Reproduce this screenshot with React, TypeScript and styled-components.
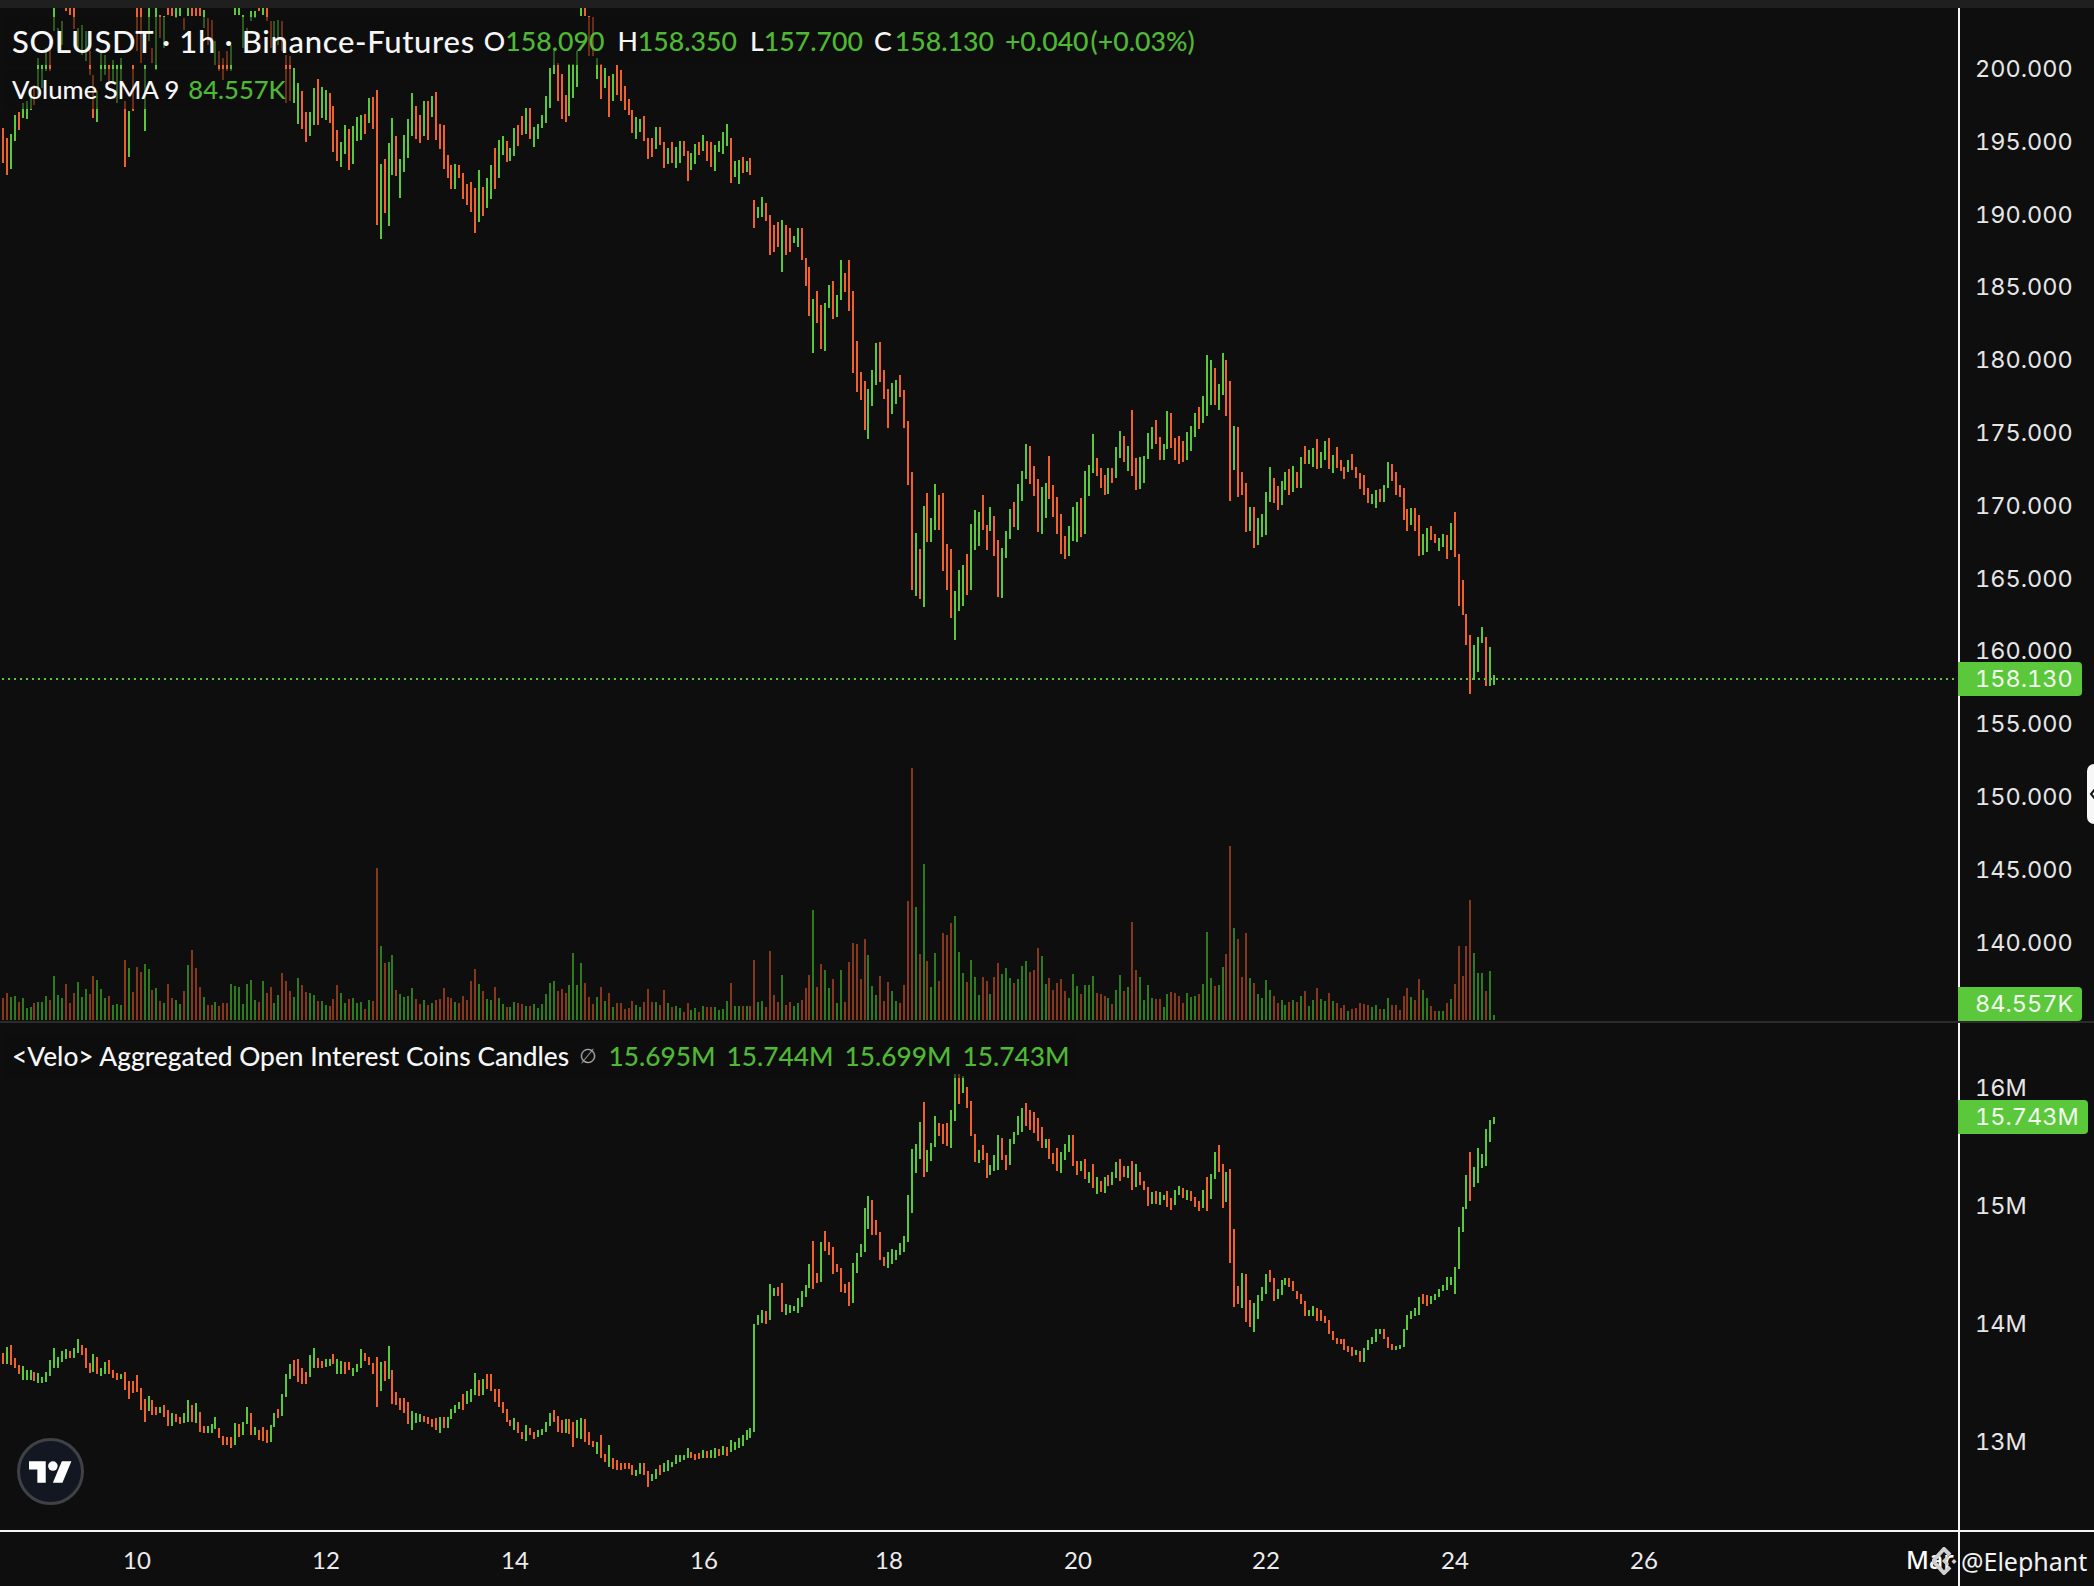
import React from "react"
import styled, { createGlobalStyle } from "styled-components"

const GREEN = "#5ac83a"
const ORANGE = "#f0622a"
const BAR_STEP = 3.934

interface Bar {
	up: boolean
	top: number
	bottom: number
}

// traced bars, "<o|g><top>,<bottom>" with y taken from zoomed crops
const parseBars = (src: string, originY: number, scaleY: number): Bar[] =>
	src
		.trim()
		.split(/\s+/)
		.map((tok) => {
			const [a, b] = tok.slice(1).split(",").map(Number)
			return { up: tok[0] === "g", top: originY + a / scaleY, bottom: originY + b / scaleY }
		})

const PRICE_LEFT = `o360,465 o390,500 g378,483 g320,398 o312,366 g285,330 g280,332 g245,305 o230,290 g150,260 g170,240 g120,190 o100,190
g0,70 g60,130 g40,110 o0,10 o0,22 o0,62 g60,130 g50,140 g70,160 o130,200 o200,330 g250,342 g130,220 g140,200 o170,230 g155,225 g170,285 g150,245
o280,476 g310,446 o170,310 o0,130 o0,165 g170,368 g0,100 o120,165 g0,185 o20,90 g25,120 o0,20 o0,25 g0,30 g0,25 o30,65 g0,25 o0,25 o0,25 o0,25
g5,60 o30,110 o35,100 g100,170 o130,190 o150,215 o130,190 g110,190 g0,20 g0,20 g20,120 g60,130 g10,40 g10,30 o0,8 g0,20 o0,40 o40,120 g38,100
g35,110 o40,130 o140,285 o145,280 g180,285 g225,348 o250,362 o312,402 g312,384 g240,350 o213,352 g236,330 g245,335 o255,345 o293,432 o365,460
g402,476 g350,438 o362,486 g355,468 g328,398 g320,396 o318,378 g270,345 o266,362 o246,650 g468,692 o453,615 g405,654 g330,500 o385,503 g453,570
g380,492 g333,450 g255,385 o293,392 o322,405 g280,385 o280,395 g265,328 o252,395 o347,423 o350,482 o440,510 o470,542 g467,543 o470,510 o495,572
o528,590 o522,613 o540,675 g487,642 o537,623 g510,600 g470,572 o420,543 g396,510 g385,440 o400,462 g420,458 g360,445 o350,415 o325,380 g300,378
o300,393 g358,417 g348,392 g320,360 g265,345 g180,300 g130,198 o165,280 o197,332 o260,342 g168,325 g168,270 g130,237 g0,25 o0,25 o25,145 o28,145
g150,212 o168,272 g180,240 o205,327 g197,278 o172,260 o186,280 o234,305 o272,322 o305,375 g328,392 g333,372 o325,398 o390,452 o390,447 g357,422
o357,412 o402,480 g420,467 o403,465 g417,480 g400,465 o400,445 o428,518 g435,487 g408,468 o403,442 g380,430 o400,460 o403,476 g410,488 g400,433
g373,438 g349,413 o390,525 g458,508 g456,527 o447,495 g460,492 o450,500 o576,660 g598,630 g567,627 o585,640`

const PRICE_RIGHT = `o-75,45 o-45,36 o-54,20 g-60,95 o-45,45 o-36,35 g-12,8 g-36,20 o-36,60 o55,138 o82,228 g178,338 o153,248 o195,326 g190,332 g135,203
o124,236 g165,230 g60,180 o99,155 o60,212 o153,398 o303,456 o396,480 o423,570 g447,597 g390,498 g309,435 o306,426 o390,477 o447,564 g430,522 g420,492
o405,471 o450,564 o543,735 o696,1050 g879,1068 o927,1077 g798,1101 o759,906 g834,906 g732,870 o765,870 o759,993 o912,1050 o927,1134 g1053,1200
g990,1113 g975,1098 o942,1065 g852,1050 g810,930 g816,918 o765,870 o855,930 g801,873 o828,948 o900,1071 g924,1074 g873,954 g807,897 o786,861 g732,870
g693,783 g612,717 o618,732 o678,768 o717,876 g741,882 g729,834 o648,777 o735,831 o771,882 o822,942 o888,957 g858,948 g801,903 g786,906 o774,891
g693,882 g675,768 g582,699 o654,708 o684,744 o705,765 g684,762 o684,729 g621,714 g573,654 o588,666 g618,693 o510,708 o654,750 g651,747 g648,729
g579,657 g561,627 o540,612 o591,660 g612,660 g513,627 o519,624 o594,660 o588,672 o603,666 g576,660 g558,633 g519,591 o501,567 g468,549 g345,528
g360,495 o384,495 g432,510 g339,465 o360,528 o423,783 g558,690 o561,771 o696,765 o729,876 g801,873 o801,924 g834,915 g822,891 g756,885 g681,786
o714,789 o738,810 g723,795 g696,750 o687,765 g678,756 o696,744 g651,744 o618,672 g630,672 g624,681 o597,687 g636,684 g603,660 o594,687 g645,699
o621,684 o660,693 o681,717 g660,696 o642,690 o681,714 o699,747 o705,765 o744,789 g762,792 g750,804 o747,786 g735,786 g666,744 o672,723 o696,765
o735,771 o744,840 o807,873 g804,855 o804,873 o825,948 g882,945 g864,936 o858,900 o882,909 g894,933 g882,921 o885,957 g849,930 o816,951 o942,1098
o1020,1125 o1122,1215 o1185,1362 g1215,1320 g1191,1296 g1161,1209 o1191,1338 g1221,1338 g1305,1335`

const VOLUME_TOPS = [
	714, 699, 711, 708, 726, 714, 744, 741, 729, 726, 726, 708, 720, 648, 705, 714, 672, 729, 699, 666, 711, 687, 702, 648, 660, 687, 714, 708, 735, 732,
	735, 600, 624, 696, 621, 636, 612, 627, 690, 684, 723, 729, 672, 714, 720, 732, 693, 615, 570, 624, 681, 711, 735, 735, 726, 738, 729, 729, 672, 678,
	681, 732, 672, 660, 720, 726, 663, 699, 681, 729, 705, 639, 663, 693, 711, 654, 675, 696, 699, 705, 723, 723, 735, 738, 717, 675, 699, 729, 717, 714,
	729, 726, 747, 720, 723, 324, 558, 609, 606, 585, 690, 702, 711, 708, 684, 717, 732, 720, 735, 729, 720, 717, 684, 711, 714, 726, 729, 708, 720, 663,
	627, 672, 693, 717, 720, 681, 714, 732, 741, 741, 726, 729, 732, 738, 738, 732, 744, 732, 702, 669, 663, 693, 687, 699, 675, 579, 675, 609, 669, 711,
	732, 711, 681, 723, 699, 741, 729, 729, 747, 744, 723, 735, 741, 726, 687, 726, 726, 735, 690, 729, 741, 738, 744, 756, 729, 750, 744, 756, 738, 741,
	741, 741, 750, 747, 723, 669, 738, 738,
	738, 738, 738, 600, 726, 723, 741, 573, 705, 726, 645, 735, 726, 738, 729, 720, 684, 645, 450, 681, 612, 630, 684, 657, 729, 630, 726, 606, 549, 552,
	657, 537, 585, 678, 705, 648, 723, 666, 693, 723, 729, 675, 423, 24, 441, 582, 312, 603, 681, 579, 663, 519, 525, 489, 468, 576, 639, 666, 600, 651,
	705, 651, 663, 702, 651, 609, 642, 624, 654, 669, 657, 618, 603, 636, 630, 564, 588, 672, 654, 690, 669, 657, 693, 714, 642, 678, 702, 675, 675, 648,
	699, 702, 708, 714, 732, 690, 645, 693, 681, 486, 630, 651, 720, 675, 714, 717, 717, 741, 702, 696, 699, 708, 729, 699, 711, 708, 702, 672, 516, 654,
	678, 675, 621, 582, 258, 504, 537, 651, 519, 654, 669, 702, 714, 660, 690, 708, 729, 720, 735, 726, 720, 726, 708, 693, 738, 720, 684, 717, 723, 699,
	723, 729, 744, 735, 753, 747, 744, 729, 732, 735, 741, 735, 747, 747, 714, 735, 735, 750, 708, 684, 711, 720, 657, 690, 714, 738, 753, 753, 753, 729,
	717, 672, 558, 648, 558, 420, 579, 639, 639, 693, 633, 765,
]

const OI_LEFT = `o945,975 g928,975 o924,978 o958,985 o978,1002 g980,1018 g990,1016 g990,1018 o995,1020 g998,1024 g1010,1026 g995,1022 g963,1006 g932,985 g955,985
g940,968 g934,960 o938,958 g932,958 g907,945 o924,950 o932,985 o972,998 g948,995 o955,1000 g985,1005 g968,1002 o964,1002 o990,1012 o998,1016 g1002,1014
o995,1044 o1020,1068 o1020,1052 o1004,1050 o1038,1098 o1068,1130 g1060,1100 o1070,1110 o1088,1110 g1090,1104 o1085,1116 o1096,1140 g1105,1140 o1108,1130
o1115,1135 g1105,1132 g1070,1130 o1085,1130 g1078,1132 o1102,1156 o1140,1160 g1140,1160 g1135,1160 g1116,1148 o1144,1172 o1166,1190 o1170,1190 o1170,1200
g1132,1190 o1135,1170 g1130,1165 g1090,1135 o1105,1165 g1142,1165 o1150,1178 o1142,1180 o1150,1185 g1138,1184 g1105,1142 o1094,1118 g1055,1114 g1000,1062
g975,1015 o963,1005 o962,1022 o985,1028 o995,1028 g950,1010 g930,985 o958,985 o966,985 g960,982 g962,980 o948,975 g962,1002 g966,1002 o968,1000 o970,990
g985,1006 g975,995 g934,985 o945,965 o955,978 o972,1002 o955,1088 g968,1045 o965,1020 g926,1014 o990,1082 o1050,1085 o1065,1098 o1065,1105 o1075,1135
g1100,1152 g1105,1132 g1108,1128 o1112,1130 o1116,1135 o1122,1142 o1118,1150 g1115,1160 o1116,1145 g1115,1145 g1095,1120 g1085,1105 g1075,1095 o1055,1098
g1045,1082 g1040,1075 g998,1058 o1018,1060 g1014,1058 o1002,1040 o1002,1045 o1040,1075 o1042,1090 o1075,1105 o1095,1130 o1125,1140 g1118,1150 o1130,1158
o1155,1175 g1136,1180 o1145,1165 o1155,1175 g1150,1170 g1148,1165 g1128,1155 g1106,1140 o1098,1130 o1112,1155 o1125,1160 g1122,1160 o1122,1162 o1130,1195
g1125,1172 g1118,1175 o1122,1182 o1155,1190 o1180,1195 g1182,1215 o1165,1225 o1215,1235 g1192,1250 o1225,1255 o1230,1258 o1238,1258 o1240,1255 o1238,1255
o1245,1270 g1258,1275 g1240,1268 o1240,1270 o1260,1302 g1268,1288 g1255,1282 o1245,1270 g1240,1262 g1230,1260 g1235,1250 g1218,1242 g1218,1235 g1218,1232
g1198,1225 o1210,1225 o1215,1232 o1213,1228`

const OI_MID = `g1450,1458 o1451,1458 g1450,1458 g1448,1458 o1449,1456 g1446,1455 o1447,1456 g1440,1452 g1442,1450 g1438,1448 g1435,1446 g1430,1440 g1428,1438`

const OI_RIGHT = `g792,1116 g765,795 g750,790 o753,792 g672,780 g684,708 o681,708 o669,756 g732,765 g735,760 g738,754 g714,759 g693,741 g675,711 g612,684 o543,687 o639,669
g546,666 o513,573 o546,585 o561,642 o612,636 o624,696 o672,699 o666,738 g609,729 g579,639 g552,591 g444,576 g408,507 o420,525 o480,525 o516,600 o591,618
g576,624 g567,612 g570,600 g549,585 g528,576 g405,546 g267,459 g252,339 g186,297 o126,351 g270,336 g249,303 g168,261 o189,228 o192,252 o189,259 g150,264
g42,183 o42,132 g48,99 o81,144 o123,228 o222,306 g270,309 o255,300 o279,354 g315,345 g285,333 g225,330 o234,300 o285,330 g237,315 g216,252 g168,225
g144,216 o129,198 o150,210 o156,219 o174,243 o201,264 g237,264 o237,297 o279,312 o264,333 g276,339 g252,300 g225,276 o225,318 o303,345 g303,333 o297,357
g336,369 o312,384 g351,402 o363,396 g351,399 o345,378 g336,375 g306,354 o297,363 o318,351 g318,354 o303,390 g312,381 o336,375 o363,390 o381,438 g396,432
o393,432 g396,435 g405,420 o393,441 o414,450 g390,435 g378,405 o384,414 g390,420 o393,423 o411,441 o423,453 g390,444 o351,453 g342,417 g276,357 o255,336
o312,444 g336,426 o327,609 o507,741 o678,732 g639,744 o642,786 o720,801 g729,816 g705,777 g681,723 g642,702 o630,666 o654,723 g687,717 g660,705 g654,675
o654,681 o663,693 o693,717 o702,732 o723,768 g750,768 g738,768 o744,783 o750,783 o768,789 o780,822 o813,840 o834,852 o837,852 o837,870 o858,876 o861,888
g870,885 o873,905 g865,905 g840,870 g830,852 g807,846 g807,822 o807,837 o831,864 o852,870 g858,870 g855,867 g807,861 g765,810 g753,777 g744,768 g711,765
o702,732 o705,738 g708,732 g702,720 g687,711 g675,693 g651,690 g651,675 g621,702 g501,627 g441,516 g345,447 o276,423 g321,381 g264,369 g282,324 g207,318
g180,246 g171,192`

const priceBars = [...parseBars(PRICE_LEFT, 8, 3), ...parseBars(PRICE_RIGHT, 240, 3)]
const volumeBars: Bar[] = VOLUME_TOPS.map((d, i) => ({
	up: priceBars[i] ? priceBars[i].up : true,
	top: 760 + d / 3,
	bottom: 1020,
}))
const oiBars = [...parseBars(OI_LEFT, 1000, 2.676), ...parseBars(OI_MID, 0, 1), ...parseBars(OI_RIGHT, 1060, 3)]

const barsPath = (bars: Bar[], up: boolean) =>
	bars
		.map((b, i) => {
			if (b.up !== up) return ""
			const x = Math.round(3 + i * BAR_STEP) - 1
			const top = Math.round(b.top)
			const bottom = Math.round(b.bottom)
			return `M${x} ${top}h2V${bottom}h-2z`
		})
		.join("")

const PRICE_TICKS = ["200.000", "195.000", "190.000", "185.000", "180.000", "175.000", "170.000", "165.000", "160.000", "155.000", "150.000", "145.000", "140.000"]
const OI_TICKS = ["16M", "15M", "14M", "13M"]
const TIME_TICKS = [
	{ label: "10", gap: 189 },
	{ label: "12", gap: 189 },
	{ label: "14", gap: 189 },
	{ label: "16", gap: 185 },
	{ label: "18", gap: 189 },
	{ label: "20", gap: 188 },
	{ label: "22", gap: 189 },
	{ label: "24", gap: 189 },
	{ label: "26", gap: 100 },
]

const GlobalStyle = createGlobalStyle`
	html, body {
		margin: 0;
		padding: 0;
		background: #0e0e0e;
	}
`

const Page = styled.div`
	width: 2094px;
	height: 1586px;
	display: flex;
	flex-direction: column;
	overflow: hidden;
	background: #0e0e0e;
`

const TopStrip = styled.div`
	height: 8px;
	background: #1f1f1f;
`

const Row = styled.div<{ $height: number }>`
	height: ${(p) => p.$height}px;
	display: flex;
`

const Pane = styled.div`
	position: relative;
	width: 1958px;
	flex: none;
`

const Chart = styled.svg`
	display: block;
	width: 1958px;
	height: 100%;
`

const Axis = styled.div<{ $paddingTop: number }>`
	position: relative;
	flex: 1;
	display: flex;
	flex-direction: column;
	box-sizing: border-box;
	padding-top: ${(p) => p.$paddingTop}px;
	padding-left: 15px;
	border-left: 2px solid #f4f4f4;
	font-family: Inter, "Liberation Sans", sans-serif;
	font-size: 23.5px;
	font-variant-numeric: tabular-nums;
	color: #e6e6e6;
`

const Tick = styled.div<{ $height: number }>`
	height: ${(p) => p.$height}px;
	line-height: ${(p) => p.$height}px;
	flex: none;
`

const PriceTag = styled.div<{ $top: number }>`
	position: absolute;
	top: ${(p) => p.$top}px;
	left: -2px;
	height: 34px;
	line-height: 34px;
	padding: 0 9px 0 17px;
	background: ${GREEN};
	color: #f2fbee;
	border-radius: 0 4px 4px 0;
`

const SideHandle = styled.div`
	position: absolute;
	top: 756px;
	right: 0;
	width: 7px;
	height: 60px;
	overflow: hidden;
	background: #f7f7f7;
	border-radius: 9px 0 0 9px;
	svg {
		display: block;
		margin: 22px 0 0 1px;
	}
`

const Separator = styled.div`
	height: 2px;
	background: #2b2b2b;
`

const BottomLine = styled.div`
	height: 2px;
	background: #f4f4f4;
`

const Legend = styled.div<{ $top: number }>`
	position: absolute;
	top: ${(p) => p.$top}px;
	left: 4px;
	display: flex;
	flex-direction: column;
	align-items: flex-start;
	gap: 4px;
	font-family: Lato, "Open Sans", "DejaVu Sans", sans-serif;
	color: #f6f6f6;
`

const LegendRow = styled.div<{ $height: number; $size: number }>`
	height: ${(p) => p.$height}px;
	display: flex;
	align-items: center;
	padding: 0 6px 0 8px;
	font-size: ${(p) => p.$size}px;
	font-weight: 500;
	white-space: nowrap;
	background: rgba(14, 14, 14, 0.6);
`

const Title = styled.span`
	font-size: 31px;
	letter-spacing: 0.67px;
`

const Pair = styled.span<{ $left?: number }>`
	display: inline-flex;
	margin-left: ${(p) => p.$left ?? 0}px;
`

const Num = styled.span<{ $left?: number }>`
	color: #4fb834;
	margin-left: ${(p) => p.$left ?? 0}px;
`

const NullMark = styled.span`
	margin: 0 12px 0 10px;
	color: #a9a9a9;
	font-family: "DejaVu Sans", sans-serif;
	font-size: 20px;
`

const LogoBadge = styled.div`
	position: absolute;
	left: 17px;
	top: 415px;
	width: 67px;
	height: 67px;
	box-sizing: border-box;
	display: flex;
	align-items: center;
	justify-content: center;
	border: 3px solid #3f4146;
	border-radius: 50%;
	background: #131722;
`

const TimeRow = styled.div`
	flex: 1;
	display: flex;
`

const TimeScale = styled.div`
	position: relative;
	width: 1958px;
	flex: none;
	display: flex;
	align-items: center;
	padding-left: 123px;
	box-sizing: border-box;
	font-family: Lato, "Open Sans", sans-serif;
	font-size: 24px;
	color: #ececec;
`

const TimeTick = styled.div<{ $gap: number }>`
	width: ${(p) => p.$gap}px;
	flex: none;
`

const MonthLabel = styled.div`
	position: absolute;
	left: 1906px;
	top: 10px;
	font-family: "Noto Sans", sans-serif;
	font-weight: 500;
	font-size: 25px;
	color: #fff;
`

const Watermark = styled.svg`
	position: absolute;
	left: 1932px;
	top: 15px;
`

const Handle = styled.div`
	flex: 1;
	border-left: 2px solid #f4f4f4;
	display: flex;
	align-items: center;
	font-family: "Noto Sans", sans-serif;
	font-size: 25px;
	color: #f2f2f2;
	padding-left: 1px;
	padding-top: 3px;
`

const BarSeries = ({ bars, up, dim }: { bars: Bar[]; up: boolean; dim?: boolean }) => {
	const fill = dim ? (up ? "#2f7a1e" : "#85381b") : up ? GREEN : ORANGE
	return <path d={barsPath(bars, up)} fill={fill} shapeRendering="crispEdges" />
}

const App = () => {
	return (
		<Page>
			<GlobalStyle />
			<TopStrip />
			<Row $height={1013}>
				<Pane>
					<Chart viewBox="0 8 1958 1013">
						<BarSeries bars={volumeBars} up={true} dim />
						<BarSeries bars={volumeBars} up={false} dim />
						<BarSeries bars={priceBars} up={true} />
						<BarSeries bars={priceBars} up={false} />
						<line x1="2" x2="1958" y1="679" y2="679" stroke={GREEN} strokeWidth="2" strokeDasharray="2 4" shapeRendering="crispEdges" />
					</Chart>
					<Legend $top={9}>
						<LegendRow $height={48} $size={26.7}>
							<Title>SOLUSDT · 1h · Binance-Futures</Title>
							<Pair $left={9}>
								O<Num>158.090</Num>
							</Pair>
							<Pair $left={13}>
								H<Num>158.350</Num>
							</Pair>
							<Pair $left={13}>
								L<Num>157.700</Num>
							</Pair>
							<Pair $left={11}>
								C<Num $left={3}>158.130</Num>
							</Pair>
							<Num $left={11}>+0.040</Num>
							<Num $left={2}>(+0.03%)</Num>
						</LegendRow>
						<LegendRow $height={40} $size={25.6}>
							Volume SMA 9<Num $left={9}>84.557K</Num>
						</LegendRow>
					</Legend>
				</Pane>
				<Axis $paddingTop={25}>
					{PRICE_TICKS.map((t) => (
						<Tick key={t} $height={72.8}>
							{t}
						</Tick>
					))}
					<PriceTag $top={654}>158.130</PriceTag>
					<PriceTag $top={979}>84.557K</PriceTag>
					<SideHandle>
						<svg width="10" height="16" viewBox="0 0 10 16">
							<path d="M8 2 3 8l5 6" fill="none" stroke="#111" strokeWidth="2" />
						</svg>
					</SideHandle>
				</Axis>
			</Row>
			<Separator />
			<Row $height={507}>
				<Pane>
					<Chart viewBox="0 1023 1958 507">
						<BarSeries bars={oiBars} up={true} />
						<BarSeries bars={oiBars} up={false} />
					</Chart>
					<Legend $top={11}>
						<LegendRow $height={44} $size={26.3}>
							{"<Velo> Aggregated Open Interest Coins Candles"}
							<NullMark>∅</NullMark>
							<Num>15.695M</Num>
							<Num $left={11}>15.744M</Num>
							<Num $left={11}>15.699M</Num>
							<Num $left={11}>15.743M</Num>
						</LegendRow>
					</Legend>
					<LogoBadge>
						<svg width="43" height="22" viewBox="0 4 36 18">
							<path d="M14 22H7V11H0V4h14v18zM28 22h-8l7.5-18h8L28 22z" fill="#fff" />
							<circle cx="20" cy="8" r="4" fill="#fff" />
						</svg>
					</LogoBadge>
				</Pane>
				<Axis $paddingTop={6}>
					{OI_TICKS.map((t) => (
						<Tick key={t} $height={118}>
							{t}
						</Tick>
					))}
					<PriceTag $top={77}>15.743M</PriceTag>
				</Axis>
			</Row>
			<BottomLine />
			<TimeRow>
				<TimeScale>
					{TIME_TICKS.map((t) => (
						<TimeTick key={t.label} $gap={t.gap}>
							{t.label}
						</TimeTick>
					))}
					<MonthLabel>Mar</MonthLabel>
					<Watermark width="26" height="28" viewBox="0 0 26 28">
						<path d="M18 8 12 2 1 14l11 12 6-6" fill="none" stroke="#cfcfcf" strokeWidth="4" />
						<path d="M16 10l-4 4 4 4" fill="none" stroke="#cfcfcf" strokeWidth="3" />
						<path d="M22 12l2.500 2.500L22 17l-2.500-2.500z" fill="#cfcfcf" />
					</Watermark>
				</TimeScale>
				<Handle>@Elephant</Handle>
			</TimeRow>
		</Page>
	)
}

export default App
